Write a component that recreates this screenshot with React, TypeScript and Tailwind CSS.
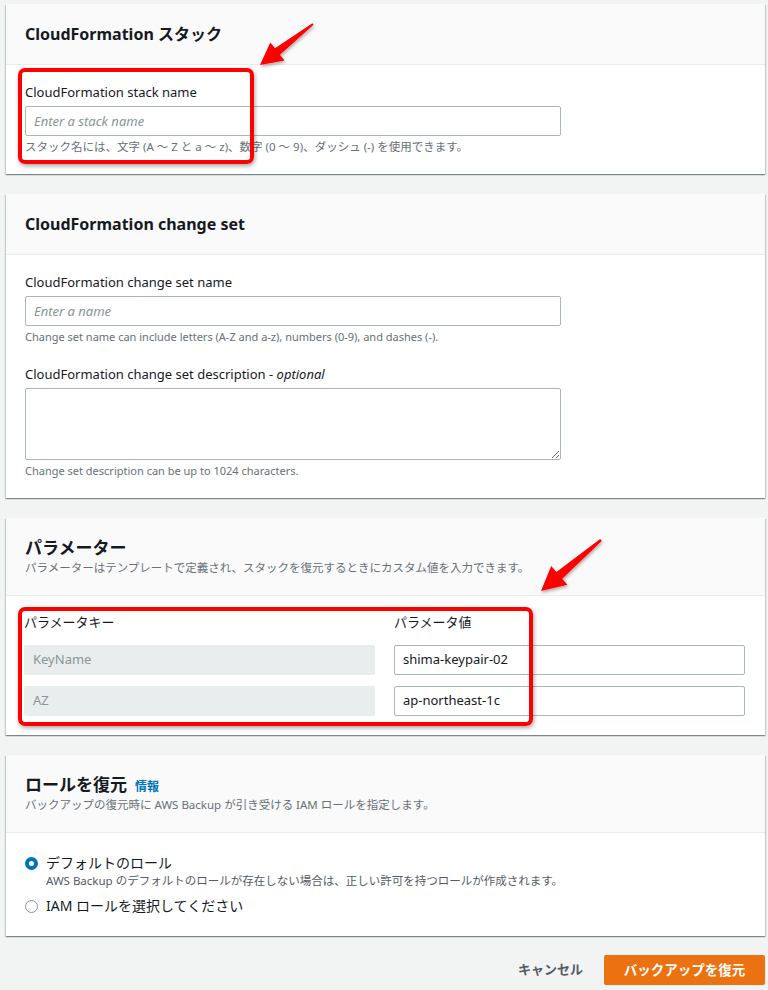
// Restore backup form: CloudFormation stack, change set, parameters and role

const cardShadow =
  'shadow-[0_1px_1px_0_rgba(0,28,36,0.3),1px_1px_1px_0_rgba(0,28,36,0.15),-1px_1px_1px_0_rgba(0,28,36,0.15)]';

function Card({ children }: { children: React.ReactNode }) {
  return <section className={`bg-white ${cardShadow}`}>{children}</section>;
}

function CardHeader({
  title,
  description,
  info,
  large,
}: {
  title: string;
  description?: string;
  info?: boolean;
  large?: boolean;
}) {
  return (
    <div className="bg-[#fafafa] border-b border-[#eaeded] px-[19px] py-[19px]">
      <div className="flex items-baseline gap-2">
        <h2 className={`${large ? 'text-[17px]' : 'text-[16px]'} font-bold leading-[22px] text-[#16191f]`}>{title}</h2>
        {info && <a className="text-[12px] font-bold text-[#0073bb]">情報</a>}
      </div>
      {description && <p className="text-[11.5px] leading-[16px] text-[#687078] mt-[1px]">{description}</p>}
    </div>
  );
}

function TextInput({ placeholder, value }: { placeholder?: string; value?: string }) {
  return (
    <input
      readOnly
      placeholder={placeholder}
      defaultValue={value}
      className="w-[536px] h-[30px] border border-[#aab7b8] rounded-[2px] px-[8px] text-[13px] text-[#16191f] placeholder:italic placeholder:text-[#879596] bg-white outline-none"
    />
  );
}

function Annotation({ className }: { className: string }) {
  return (
    <div
      className={`absolute border-[4px] border-[#ff0000] rounded-[7px] shadow-[1px_2px_4px_rgba(0,0,0,0.35)] pointer-events-none ${className}`}
    />
  );
}

export default function App() {
  return (
    <div className="relative w-[768px] h-[990px] bg-[#f2f3f3] overflow-hidden font-['Noto_Sans','Noto_Sans_CJK_JP',sans-serif] text-[#16191f]">
      <div className="flex flex-col gap-5 pt-1 pl-[6px] pr-[3px]">
        <Card>
          <CardHeader title="CloudFormation スタック" />
          <div className="px-[19px] pt-[17px] pb-[19px]">
            <label className="block text-[13px] leading-[20px] mb-[4px]">CloudFormation stack name</label>
            <TextInput placeholder="Enter a stack name" />
            <p className="text-[11.5px] leading-[16px] text-[#687078] mt-[3px]">
              スタック名には、文字 (A ～ Z と a ～ z)、数字 (0 ～ 9)、ダッシュ (-) を使用できます。
            </p>
          </div>
        </Card>

        <Card>
          <CardHeader title="CloudFormation change set" />
          <div className="px-[19px] pt-[17px] pb-[19px]">
            <label className="block text-[13px] leading-[20px] mb-[4px]">CloudFormation change set name</label>
            <TextInput placeholder="Enter a name" />
            <p className="text-[11px] leading-[16px] text-[#687078] mt-[3px]">
              Change set name can include letters (A-Z and a-z), numbers (0-9), and dashes (-).
            </p>
            <label className="block text-[13px] leading-[20px] mb-[4px] mt-[19px]">
              CloudFormation change set description - <i>optional</i>
            </label>
            <textarea
              readOnly
              className="block w-[536px] h-[72px] border border-[#aab7b8] rounded-[2px] bg-white outline-none"
            />
            <p className="text-[11px] leading-[16px] text-[#687078] mt-[3px]">
              Change set description can be up to 1024 characters.
            </p>
          </div>
        </Card>

        <Card>
          <CardHeader
            large
            title="パラメーター"
            description="パラメーターはテンプレートで定義され、スタックを復元するときにカスタム値を入力できます。"
          />
          <div className="pl-[18px] pr-[19px] pt-[16px] pb-[19px]">
            <div className="grid grid-cols-[351px_351px] gap-x-[19px]">
              <div className="text-[13px] leading-[20px] text-[#16191f]">パラメータキー</div>
              <div className="text-[13px] leading-[20px] text-[#16191f]">パラメータ値</div>
              {[
                ['KeyName', 'shima-keypair-02'],
                ['AZ', 'ap-northeast-1c'],
              ].map(([k, v], i) => (
                <div key={k} className="contents">
                  <div
                    className={`h-[30px] bg-[#eaeded] rounded-[2px] px-[9px] flex items-center text-[13px] text-[#879596] ${i === 0 ? 'mt-[13px]' : 'mt-[11px]'}`}
                  >
                    {k}
                  </div>
                  <div
                    className={`h-[30px] bg-white border border-[#aab7b8] rounded-[2px] px-[8px] flex items-center text-[13px] text-[#16191f] ${i === 0 ? 'mt-[13px]' : 'mt-[11px]'}`}
                  >
                    {v}
                  </div>
                </div>
              ))}
            </div>
          </div>
        </Card>

        <Card>
          <CardHeader
            large
            title="ロールを復元"
            info
            description="バックアップの復元時に AWS Backup が引き受ける IAM ロールを指定します。"
          />
          <div className="px-[19px] pt-[20px] pb-[20px]">
            <div className="flex gap-[8px]">
              <span className="mt-[4px] w-[13px] h-[13px] rounded-full bg-[#0073bb] flex items-center justify-center shrink-0">
                <span className="w-[5px] h-[5px] rounded-full bg-white" />
              </span>
              <div>
                <div className="text-[14px] leading-[20px]">デフォルトのロール</div>
                <div className="text-[11.5px] leading-[16px] text-[#545b64]">
                  AWS Backup のデフォルトのロールが存在しない場合は、正しい許可を持つロールが作成されます。
                </div>
              </div>
            </div>
            <div className="flex gap-[8px] mt-[7px]">
              <span className="mt-[4px] w-[13px] h-[13px] rounded-full border border-[#879596] bg-white shrink-0" />
              <div className="text-[14px] leading-[20px]">IAM ロールを選択してください</div>
            </div>
          </div>
        </Card>

        <div className="flex justify-end items-center gap-[21px] -mt-[1px]">
          <button className="text-[13px] font-bold text-[#545b64]">キャンセル</button>
          <button className="w-[161px] h-[30px] bg-[#ec7211] rounded-[2px] text-[13.5px] font-bold text-white">
            バックアップを復元
          </button>
        </div>
      </div>

      <Annotation className="left-[18px] top-[68px] w-[236px] h-[96px]" />
      <Annotation className="left-[18px] top-[607px] w-[515px] h-[119px]" />

      <svg className="absolute left-0 top-0 pointer-events-none" width="768" height="990">
        <defs>
          <filter id="sh" x="-20%" y="-20%" width="140%" height="140%">
            <feDropShadow dx="1" dy="2" stdDeviation="1.5" floodColor="#000" floodOpacity="0.3" />
          </filter>
        </defs>
        <polygon
          filter="url(#sh)"
          fill="#ff0000"
          points="312.4,23.2 275,48.3 270.3,42.6 260,65 284.5,60.4 279.9,54.7 313.6,24.8"
        />
        <polygon
          filter="url(#sh)"
          fill="#ff0000"
          points="600.2,539.1 556.4,572 551.2,566 541,591 567.4,584.8 562.2,578.8 601.8,540.9"
        />
      </svg>
    </div>
  );
}
